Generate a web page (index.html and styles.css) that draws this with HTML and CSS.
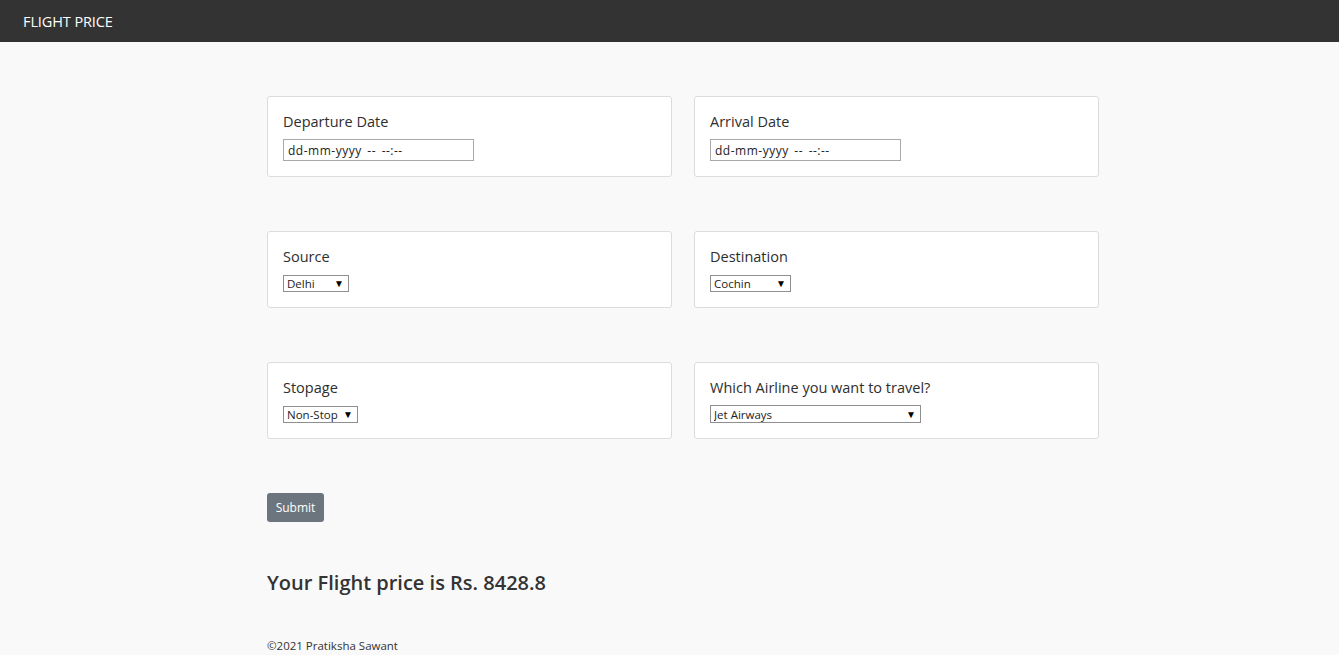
FILE: index.html
```html
<!DOCTYPE html>
<html lang="en">
<head>
<meta charset="utf-8">
<title>Flight Price</title>
<link rel="stylesheet" href="styles.css">
</head>
<body>
<nav class="navbar"><span class="brand">FLIGHT PRICE</span></nav>
<main class="container">
  <form class="form-grid" onsubmit="return false;">
    <div class="card">
      <label class="card-label">Departure Date</label>
      <input class="date-input" type="text" value="dd-mm-yyyy -- --:--">
    </div>
    <div class="card">
      <label class="card-label">Arrival Date</label>
      <input class="date-input" type="text" value="dd-mm-yyyy -- --:--">
    </div>
    <div class="card">
      <label class="card-label">Source</label>
      <span class="select-wrap w-source"><select class="select"><option>Delhi</option></select></span>
    </div>
    <div class="card">
      <label class="card-label">Destination</label>
      <span class="select-wrap w-dest"><select class="select"><option>Cochin</option></select></span>
    </div>
    <div class="card">
      <label class="card-label">Stopage</label>
      <span class="select-wrap w-stop"><select class="select"><option>Non-Stop</option></select></span>
    </div>
    <div class="card card-air">
      <label class="card-label">Which Airline you want to travel?</label>
      <span class="select-wrap w-air"><select class="select"><option>Jet Airways</option></select></span>
    </div>
  </form>
  <button class="btn-submit" type="button">Submit</button>
  <h3 class="result">Your Flight price is Rs. 8428.8</h3>
  <footer class="footer">©2021 Pratiksha Sawant</footer>
</main>
</body>
</html>
```
FILE: styles.css
```css
html, body {
  margin: 0;
  padding: 0;
}
body {
  background: #f9f9f9;
  color: #333;
  font-family: "Open Sans", "Noto Sans", Arial, sans-serif;
}
.navbar {
  height: 42px;
  background: #333333;
  display: flex;
  align-items: center;
  padding-left: 23px;
}
.brand {
  color: #fff;
  font-size: 14.5px;
  letter-spacing: -0.1px;
}
.container {
  margin-left: 267px;
  width: 832px;
  padding-top: 54px;
}
.form-grid {
  display: grid;
  grid-template-columns: 405px 405px;
  column-gap: 22px;
  row-gap: 54px;
}
.card {
  background: #fff;
  border: 1px solid #dcdcdc;
  border-radius: 3px;
  padding: 15px;
  display: flex;
  flex-direction: column;
  align-items: flex-start;
}
.card-label {
  font-size: 14.5px;
  line-height: 19px;
  color: #2e2e2e;
  margin-bottom: 8px;
}
.date-input {
  box-sizing: border-box;
  width: 191px;
  height: 22px;
  border: 1px solid #a9a9a9;
  padding: 0 4px;
  font-family: inherit;
  font-size: 12px;
  letter-spacing: 0.5px;
  word-spacing: 2px;
  color: #222;
  background: #fff;
  outline: none;
}
.card:nth-child(n+3) .card-label {
  margin-bottom: 9px;
}
.form-grid .card-air .card-label {
  margin-bottom: 8px;
}
.select-wrap {
  position: relative;
  display: flex;
  height: 17px;
}
.select-wrap::after {
  content: "\25BC";
  position: absolute;
  right: 5px;
  top: 0;
  line-height: 17px;
  font-size: 10px;
  color: #000;
  pointer-events: none;
}
.select {
  -webkit-appearance: none;
  appearance: none;
  display: block;
  box-sizing: border-box;
  width: 100%;
  height: 17px;
  margin: 0;
  border: 1px solid #8f8f8f;
  border-radius: 0;
  background: #fff;
  padding: 0 3px;
  font-family: inherit;
  font-size: 11.5px;
  line-height: 15px;
  color: #222;
}
.w-source { width: 66px; }
.w-dest { width: 81px; }
.w-stop { width: 75px; }
.w-air { width: 211px; height: 18px; }
.w-air .select { height: 18px; }
.w-air::after { line-height: 18px; }
.btn-submit {
  display: block;
  margin-top: 54px;
  width: 57px;
  height: 29px;
  border: none;
  border-radius: 3px;
  background: #6c757d;
  color: #fff;
  font-family: inherit;
  font-size: 12px;
  padding: 0;
}
.result {
  margin: 46px 0 0;
  font-size: 20px;
  font-weight: 600;
  line-height: 29px;
  color: #333;
}
.footer {
  margin-top: 41px;
  font-size: 11.5px;
  line-height: 16px;
  color: #333;
}
```
